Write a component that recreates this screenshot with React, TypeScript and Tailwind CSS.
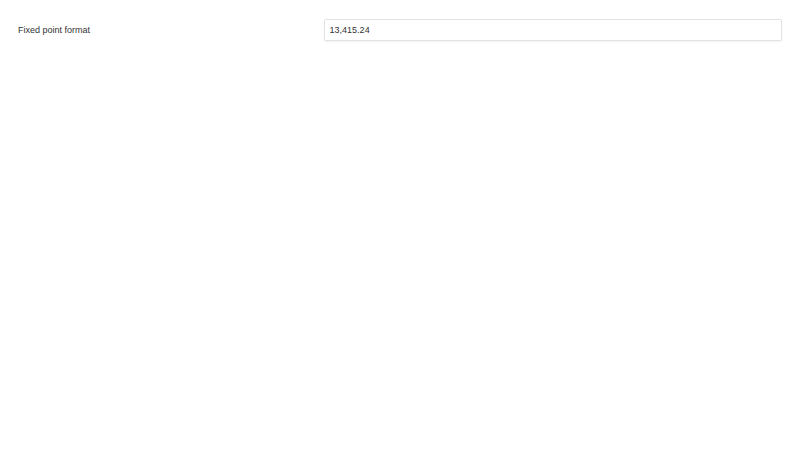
export default function App() {
  return (
    <div className="min-h-[450px] bg-white px-[18px] pt-[19px] font-['Liberation_Sans',sans-serif] text-[9px] text-[#333]">
      <div className="grid grid-cols-[2fr_3fr] items-center">
        <label className="leading-[22px]">Fixed point format</label>
        <input
          readOnly
          value="13,415.24"
          className="h-[22px] w-full rounded-[2px] border border-[#e3e3e3] bg-white px-[5px] text-[9px] text-[#333] shadow-[0_1px_2px_rgba(0,0,0,0.06)] outline-none"
        />
      </div>
    </div>
  );
}
